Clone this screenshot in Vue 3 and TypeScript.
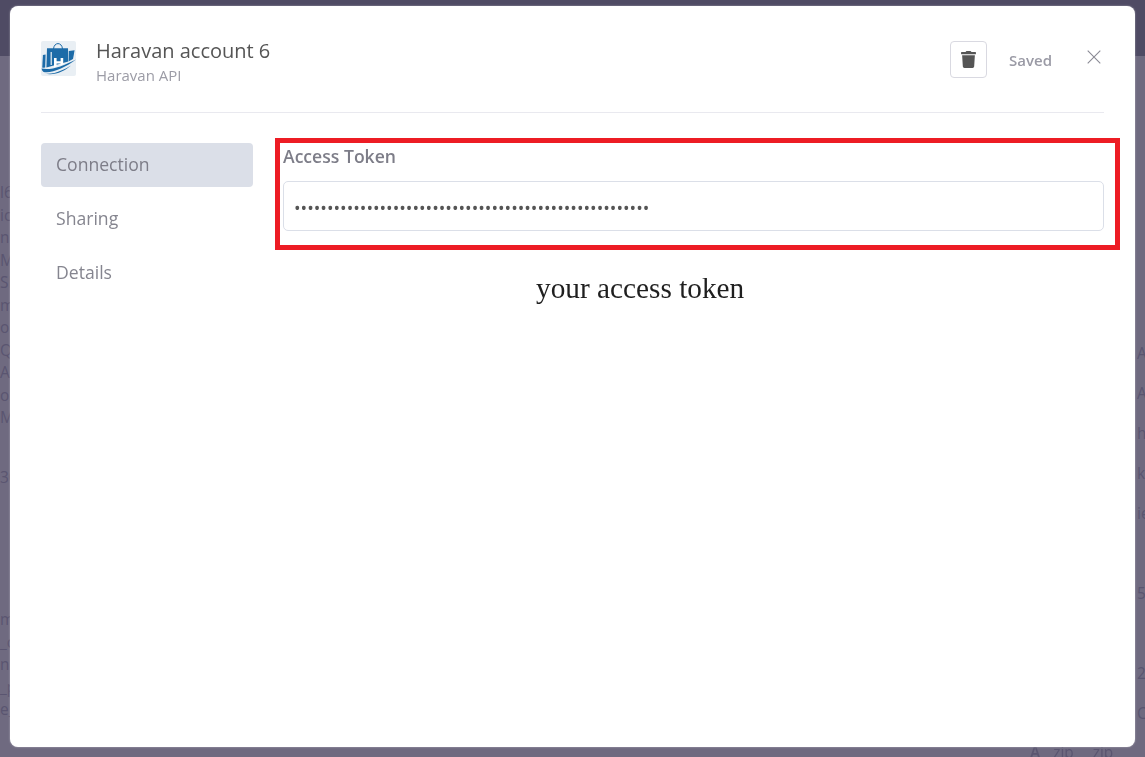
<script setup lang="ts">
import { ref } from 'vue'

const token = ref('•'.repeat(54))
const activeTab = ref('Connection')
const tabs = ['Connection', 'Sharing', 'Details']

// table rows showing through the dimmed backdrop
const leftRows = ['l6', 'ic', 'nF', 'M', 'SN', 'm', 'oi', 'Q', 'Ax', 'o2', 'M', '', '30', '', '', '', '', '', 'm', '_c', 'n.', '_p', 'e_']
const rightRows = ['A', 'A', 'h', 'k', 'ie', '', '51', '', '2', 'C']
</script>

<template>
  <div class="page">
    <div class="backdrop">
      <div class="backdrop-top"></div>
      <div class="backdrop-body">
        <div class="col-left">
          <div v-for="(r, i) in leftRows" :key="i" class="bg-row">{{ r }}</div>
        </div>
        <div class="col-right">
          <div v-for="(r, i) in rightRows" :key="i" class="bg-row-right">{{ r }}</div>
        </div>
      </div>
      <div class="backdrop-foot">
        <span class="foot-a">A</span>
        <span>zip</span>
        <span>zip</span>
      </div>
    </div>

    <div class="modal">
      <header class="modal-header">
        <div class="logo">
          <svg width="35" height="35" viewBox="0 0 35 35">
            <rect width="35" height="35" rx="2" fill="#e9eff4" />
            <path d="M12.5 8 C13 0.8 21 0.8 21.5 8" fill="none" stroke="#1c6ba8" stroke-width="1" />
            <path d="M6 7.3 L27 7.3 L27.4 20.5 L5.4 26.5 Z" fill="#1c6ba8" />
            <path d="M27.8 10 L33.6 9.2 L32 18 L27.9 20.2 Z" fill="#1c6ba8" />
            <path d="M1.9 14 L4.6 13.4 L4.2 26.5 L1.2 27 Z" fill="#1c6ba8" />
            <path d="M9.6 11 H10.8 V24 H9.6 Z" fill="#e9eff4" />
            <path d="M13 17 H15.6 V20.2 H19.6 V17 H22.2 V25.6 H19.6 V22.4 H15.6 V26 H13 Z" fill="#fff" />
            <path d="M0.4 26.6 C10 28.6 22 24.6 35 17 V19.6 C25 26 11 31.8 2.4 30.6 C1.2 30 0.6 28.4 0.4 26.6 Z" fill="#e9eff4" />
            <path d="M0.6 27.6 C10 29.5 22 25 35 18.4 C25 26 11 32.6 2.6 31 C1.4 30.4 0.8 29 0.6 27.6 Z" fill="#1c6ba8" />
            <path d="M3.5 32.4 C13 34 24 28 30 24.4 C24 29.6 13 35.4 3.5 32.4 Z" fill="#1c6ba8" />
          </svg>
        </div>
        <div class="titles">
          <div class="title">Haravan account 6</div>
          <div class="subtitle">Haravan API</div>
        </div>
        <div class="actions">
          <button class="trash-btn" type="button" aria-label="Delete">
            <svg width="15" height="17" viewBox="0 0 448 512">
              <path fill="#555" d="M432 32H312l-9.4-18.7A24 24 0 0 0 281.1 0H166.8a23.72 23.72 0 0 0-21.4 13.3L136 32H16A16 16 0 0 0 0 48v32a16 16 0 0 0 16 16h416a16 16 0 0 0 16-16V48a16 16 0 0 0-16-16zM53.2 467a48 48 0 0 0 47.9 45h245.8a48 48 0 0 0 47.9-45L416 128H32z" />
            </svg>
          </button>
          <span class="saved">Saved</span>
          <button class="close-btn" type="button" aria-label="Close">
            <svg width="14" height="14" viewBox="0 0 14 14">
              <path d="M0.7 0.7 L13.3 13.3 M13.3 0.7 L0.7 13.3" stroke="#8a8a94" stroke-width="1.1" fill="none" />
            </svg>
          </button>
        </div>
      </header>

      <div class="modal-body">
        <nav class="sidebar">
          <div
            v-for="tab in tabs"
            :key="tab"
            class="tab"
            :class="{ active: tab === activeTab }"
            @click="activeTab = tab"
          >
            {{ tab }}
          </div>
        </nav>
        <main class="content">
          <div class="field">
            <label class="field-label" for="token">Access Token</label>
            <input id="token" class="field-input" type="text" :value="token" readonly />
            <div class="highlight"></div>
          </div>
          <div class="caption">your access token</div>
        </main>
      </div>
    </div>
  </div>
</template>

<style scoped>
.page {
  position: relative;
  width: 1145px;
  height: 757px;
  overflow: hidden;
  font-family: "Open Sans", "Liberation Sans", sans-serif;
}

.backdrop {
  width: 100%;
  height: 100%;
  display: flex;
  flex-direction: column;
  background: #6f6a80;
  color: #5a5570;
  font-size: 15.4px;
  filter: blur(0.4px);
}

.backdrop-top {
  height: 56px;
  flex: none;
  background: #4f4b64;
}

.backdrop-body {
  flex: 1;
  display: flex;
  justify-content: space-between;
  min-height: 0;
  padding-top: 126px;
}

.col-left {
  width: 10px;
  overflow: hidden;
}

.bg-row {
  height: 22.5px;
  line-height: 22.5px;
  white-space: nowrap;
}

.bg-row:nth-child(12) {
  height: 37px;
}

.bg-row:nth-child(14) {
  height: 30px;
}

.col-right {
  width: 8px;
  overflow: hidden;
  padding-top: 152px;
}

.bg-row-right {
  height: 40px;
  line-height: 40px;
  white-space: nowrap;
}

.backdrop-foot {
  position: absolute;
  left: 1030px;
  top: 742px;
  display: flex;
  gap: 13px;
}

.foot-a {
  font-weight: 600;
}

.backdrop-foot span:last-child {
  margin-left: 6px;
}

.modal {
  position: absolute;
  left: 10px;
  top: 6px;
  width: 1125px;
  height: 741px;
  box-sizing: border-box;
  padding: 35px 31px 0;
  background: #fff;
  border-radius: 8px;
  box-shadow: 0 0 2px rgba(255, 255, 255, 0.5);
}

.modal-header {
  display: flex;
  align-items: flex-start;
  height: 71px;
  border-bottom: 1px solid #e9e9ef;
}

.logo {
  width: 35px;
  height: 35px;
  flex: none;
}

.titles {
  margin-left: 20px;
  margin-top: -3px;
}

.title {
  font-size: 20px;
  line-height: 25px;
  color: #555;
}

.subtitle {
  font-size: 15px;
  line-height: 24px;
  color: #9c9ca6;
}

.actions {
  margin-left: auto;
  display: flex;
  align-items: center;
  height: 37px;
}

.trash-btn {
  width: 37px;
  height: 37px;
  padding: 0;
  display: flex;
  align-items: center;
  justify-content: center;
  background: #fff;
  border: 1px solid #d9d9e1;
  border-radius: 4px;
}

.saved {
  margin-left: 22px;
  font-size: 15px;
  font-weight: 600;
  color: #9a9aa5;
}

.close-btn {
  margin-left: 35px;
  margin-right: 3px;
  margin-top: -6px;
  padding: 0;
  display: flex;
  background: none;
  border: none;
}

.modal-body {
  display: flex;
  gap: 30px;
  padding-top: 30px;
}

.sidebar {
  width: 212px;
  flex: none;
  display: flex;
  flex-direction: column;
  gap: 10px;
}

.tab {
  height: 44px;
  line-height: 42px;
  padding-left: 15px;
  border-radius: 4px;
  font-size: 17.6px;
  color: #85858f;
}

.tab.active {
  background: #dbdfe8;
  color: #7d7d88;
}

.content {
  flex: 1;
  min-width: 0;
}

.field {
  position: relative;
}

.field-label {
  display: block;
  height: 38px;
  font-size: 17.6px;
  font-weight: 600;
  line-height: 26px;
  color: #7d7d88;
}

.field-input {
  display: block;
  width: 100%;
  height: 50px;
  box-sizing: border-box;
  padding: 3px 10px 0;
  border: 1px solid #dbdfe8;
  border-radius: 5px;
  outline: none;
  font-family: "Open Sans", "Liberation Sans", sans-serif;
  font-size: 17.5px;
  color: #555;
}

.highlight {
  position: absolute;
  left: -8px;
  right: -16px;
  top: -5px;
  height: 112px;
  box-sizing: border-box;
  border: 5px solid #ed1c24;
  pointer-events: none;
}

.caption {
  margin-top: 36px;
  margin-left: 253px;
  font-family: "Liberation Serif", serif;
  font-size: 29.3px;
  line-height: 42px;
  color: #1f1f1f;
}
</style>

<style>
html,
body {
  margin: 0;
  overflow: hidden;
}
</style>
